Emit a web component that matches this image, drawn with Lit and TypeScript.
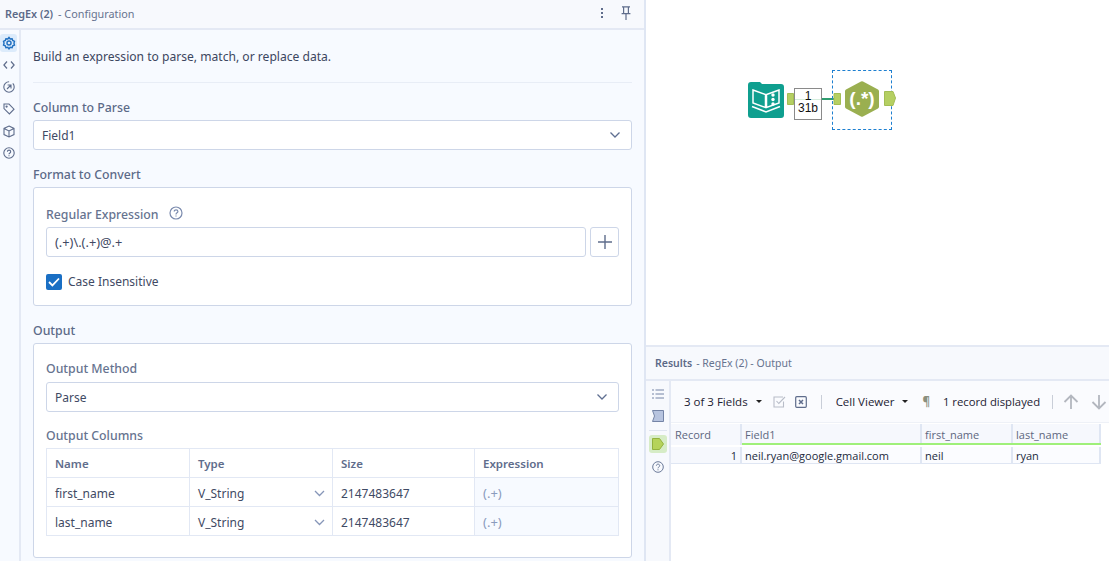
import { LitElement, html, css, svg } from "lit";
import { customElement } from "lit/decorators.js";

const chevron = svg`<svg class="chev" width="12" height="8" viewBox="0 0 12 8"><path d="M1.5 1.5 6 6l4.5-4.5" fill="none" stroke="#5f6f91" stroke-width="1.3"/></svg>`;
const chevronSmall = svg`<svg width="11" height="7" viewBox="0 0 11 7"><path d="M1 1l4.5 4.5L10 1" fill="none" stroke="#8696b8" stroke-width="1.3"/></svg>`;

@customElement("app-root")
export class AppRoot extends LitElement {
  static styles = css`
    :host { display: block; width: 1109px; height: 561px; overflow: hidden; font-family: "Noto Sans", sans-serif; font-size: 12px; color: #3a4560; background: #fff; }
    * { box-sizing: border-box; }
    .root { display: flex; height: 561px; }
    .left { width: 646px; flex: none; display: flex; flex-direction: column; background: #f7faff; border-right: 2px solid #dfe6f3; }
    .head { height: 30px; flex: none; display: flex; align-items: center; padding: 0 13px 2px 5px; border-bottom: 2px solid #e4e9f4; font-size: 10.8px; color: #66738f; background: #f7f9fd; }
    .head b { font-weight: 600; color: #5c6a88; margin-right: 5px; }
    .head .sp { flex: 1; }
    .head svg { display: block; }
    .dots { margin-right: 17px; }
    .body { flex: 1; display: flex; min-height: 0; }
    .rail { width: 21px; flex: none; border-right: 2px solid #e4e9f4; display: flex; flex-direction: column; align-items: center; padding: 4px 2px 0 0; gap: 2px; }
    .rail div { width: 17px; height: 20px; display: flex; align-items: center; justify-content: center; border-radius: 3px; }
    .rail .on { background: #dcebfb; height: 18px; margin-bottom: 1px; }
    .form { flex: 1; padding: 0 12px 0 12px; min-width: 0; }
    .desc { height: 53px; padding-top: 17px; line-height: 20px; font-size: 12.1px; color: #3c4660; border-bottom: 1px solid #e8edf6; }
    .sec { height: 18px; line-height: 18px; font-size: 12.3px; font-weight: 500; color: #5c6a88; }
    .s1 { margin-top: 16px; margin-bottom: 3px; }
    .s2 { margin-top: 16px; margin-bottom: 3px; }
    .s3 { margin-top: 16px; margin-bottom: 3px; }
    .select, .input { height: 30px; background: #fff; border: 1px solid #cdd6e8; border-radius: 3px; display: flex; align-items: center; padding: 0 10px 0 8px; font-size: 12px; color: #3f4a64; justify-content: space-between; }
    .box { background: #fff; border: 1px solid #cdd6e8; border-radius: 3px; padding: 0 12px; }
    .box1 { height: 119px; padding-top: 18px; }
    .box2 { height: 215px; padding-top: 16px; }
    .lab { height: 18px; line-height: 18px; font-size: 12.3px; font-weight: 500; color: #66738f; display: flex; align-items: center; gap: 10px; margin-bottom: 3px; }
    .lab svg { margin-bottom: 4px; }
    .row { display: flex; gap: 4px; }
    .row .input { flex: 1; color: #3f4a64; font-size: 12.8px; }
    .plus { width: 29px; height: 30px; flex: none; border: 1px solid #cdd6e8; border-radius: 3px; display: flex; align-items: center; justify-content: center; }
    .check { display: flex; align-items: center; gap: 6px; margin-top: 17px; font-size: 12px; color: #3f4a64; height: 15px; }
    .cb { width: 16px; height: 16px; background: #1a6fc4; border-radius: 2px; display: flex; align-items: center; justify-content: center; }
    .sel-wrap { margin-top: 4px; }
    .lab2 { margin-top: 15px; margin-bottom: 3px; }
    .tbl { display: grid; grid-template-columns: 143px 143px 142px 144px; border-top: 1px solid #e2e8f4; border-left: 1px solid #e2e8f4; }
    .c { height: 29px; border-right: 1px solid #e2e8f4; border-bottom: 1px solid #e2e8f4; display: flex; align-items: center; padding: 2px 8px 0; font-size: 12px; color: #3f4a64; }
    .c.h { font-weight: 600; color: #5f6d8c; font-size: 11.5px; padding-top: 0; }
    .c.t { justify-content: space-between; padding-right: 7px; }
    .c.x { background: #f7faff; color: #8b9bbd; font-size: 13px; }
    .right { flex: 1; display: flex; flex-direction: column; min-width: 0; }
    .canvas { height: 345px; flex: none; background: #fff; position: relative; }
    .node { position: absolute; }
    .badge { position: absolute; left: 148px; top: 88px; width: 28px; height: 32px; background: #fff; border: 1px solid #8a8a8a; font: 12px/14px "Liberation Sans", sans-serif; color: #111; text-align: center; }
    .badge i { display: block; font-style: normal; }
    .badge .top { height: 11px; line-height: 14px; border-bottom: 1px solid #d6eedd; }
    .badge .bot { line-height: 16px; }
    .sel { position: absolute; left: 186px; top: 70px; width: 60px; height: 60px; border: 1px dashed #1d7fd0; }
    .results { flex: 1; display: flex; flex-direction: column; border-top: 2px solid #e4e9f4; min-height: 0; }
    .rh { height: 34px; flex: none; display: flex; align-items: center; padding: 0 9px; font-size: 10.5px; color: #66738f; background: #f7f9fd; border-bottom: 2px solid #e4e9f4; }
    .rh b { font-weight: 600; color: #5c6a88; margin-right: 4px; }
    .rb { flex: 1; display: flex; min-height: 0; }
    .rrail { width: 25px; flex: none; border-right: 2px solid #e4e9f4; display: flex; flex-direction: column; align-items: center; padding-top: 2px; background: #f7f9fd; }
    .rrail div { width: 18px; height: 22px; display: flex; align-items: center; justify-content: center; }
    .rrail .sep { height: 1px; width: 18px; background: #dfe5f0; margin: 3px 0 4px; }
    .rrail .on { background: #d6ecc6; border-radius: 3px; height: 18px; margin-bottom: 3px; }
    .rm { flex: 1; min-width: 0; }
    .tb { height: 42px; display: flex; align-items: center; padding-left: 13px; font-family: "Open Sans", "Noto Sans", sans-serif; font-size: 11.5px; color: #1c2233; background: #fafbfe; border-bottom: 1px solid #eef1f7; }
    .count { margin-left: 4px; font-size: 11.3px; }
    .para { margin: 0 9px 0 14px; color: #8a8f7e; font-weight: 700; }
    .caret { width: 0; height: 0; border: 3px solid transparent; border-top: 3.5px solid #222; border-bottom: 0; margin-left: 8px; }
    .vsep { width: 1px; height: 14px; background: #c9ced8; }
    .grid { display: grid; grid-template-columns: 71px 180px 91px 88px; margin-top: 1px; font-family: "Open Sans", "Noto Sans", sans-serif; font-size: 11px; }
    .g { height: 21px; display: flex; align-items: center; padding: 0 3px 0; background: #f6f8fd; color: #5d6780; border-right: 2px solid #dfe6f3; position: relative; }
    .g.first { padding-left: 4px; }
    .g.gr::after { content: ""; position: absolute; left: 0; right: -2px; bottom: 0; height: 2px; background: #9ff07a; }
    .d { height: 17px; margin-top: 2px; display: flex; align-items: center; padding: 0 3px; background: #fbfcff; color: #222a3c; border-right: 2px solid #dfe6f3; border-bottom: 1px solid #dfe6f3; }
    .d.n { justify-content: flex-end; background: #f6f8fd; }
  `;

  private gear() {
    return svg`<svg width="14" height="14" viewBox="0 0 24 24" fill="none" stroke="#1f6fc0" stroke-width="2.4"><circle cx="12" cy="12" r="3.5"/><path d="M12 2.5l2 2.6 3.3-.5 1.1 3.1 3 1.4-.9 3.2.9 3.2-3 1.4-1.1 3.1-3.3-.5-2 2.6-2-2.6-3.3.5-1.1-3.1-3-1.4.9-3.2-.9-3.2 3-1.4 1.1-3.1 3.3.5z"/></svg>`;
  }

  render() {
    const ic = "#5f6d8c";
    return html`<div class="root">
      <div class="left">
        <div class="head"><b>RegEx (2)</b><span>- Configuration</span><span class="sp"></span>
          <svg class="dots" width="4" height="12" viewBox="0 0 4 12"><g fill="${ic}"><rect x="1" y="1" width="2" height="2"/><rect x="1" y="5" width="2" height="2"/><rect x="1" y="9" width="2" height="2"/></g></svg>
          <svg width="10" height="14" viewBox="0 0 10 14" fill="none" stroke="${ic}" stroke-width="1.2"><path d="M1 .8h8M2.6 1v6.2M7.4 1v6.2M.6 7.6h8.8M5 8v6"/></svg>
        </div>
        <div class="body">
          <div class="rail">
            <div class="on">${this.gear()}</div>
            <div><svg width="12" height="10" viewBox="0 0 12 10" fill="none" stroke="${ic}" stroke-width="1.2"><path d="M4 1.5.9 5 4 8.5M8 1.5 11.1 5 8 8.5"/></svg></div>
            <div><svg width="12" height="12" viewBox="0 0 12 12" fill="none" stroke="${ic}" stroke-width="1.1"><circle cx="6" cy="6" r="5.2" stroke-dasharray="24 4"/><path d="M4 8l4-4M4.6 4H8v3.4"/></svg></div>
            <div><svg width="12" height="12" viewBox="0 0 12 12" fill="none" stroke="${ic}" stroke-width="1.1"><path d="M1 1h5l5 5.2L6.4 11 1 5.6z"/><circle cx="3.6" cy="3.6" r=".6"/></svg></div>
            <div><svg width="12" height="13" viewBox="0 0 12 13" fill="none" stroke="${ic}" stroke-width="1.1"><path d="M6 1l5 2.4v6.2L6 12 1 9.6V3.400zM1 3.400 6 6l5-2.600M6 6v6"/></svg></div>
            <div><svg width="12" height="12" viewBox="0 0 12 12" fill="none" stroke="${ic}" stroke-width="1.1"><circle cx="6" cy="6" r="5.2"/><path d="M4.4 4.7c0-2.1 3.3-2.1 3.3 0 0 1.3-1.7 1.2-1.7 2.6M6 8.300v1"/></svg></div>
          </div>
          <div class="form">
            <div class="desc">Build an expression to parse, match, or replace data.</div>
            <div class="sec s1">Column to Parse</div>
            <div class="select"><span>Field1</span>${chevron}</div>
            <div class="sec s2">Format to Convert</div>
            <div class="box box1">
              <div class="lab">Regular Expression
                <svg width="14" height="14" viewBox="0 0 14 14" fill="none" stroke="#7a8aad" stroke-width="1.2"><circle cx="7" cy="7" r="6"/><path d="M5.200 5.500c0-2.300 3.700-2.300 3.700 0 0 1.400-1.900 1.300-1.900 2.900M7 9.400v1.100"/></svg>
              </div>
              <div class="row"><div class="input">(.+)\\.(.+)@.+</div>
                <div class="plus"><svg width="14" height="14" viewBox="0 0 14 14" stroke="#5f6d8c" stroke-width="1.4"><path d="M7 0v14M0 7h14"/></svg></div>
              </div>
              <div class="check"><div class="cb"><svg width="12" height="10" viewBox="0 0 12 10" fill="none" stroke="#fff" stroke-width="1.8"><path d="M1 5l3.400 3.400L11 1.500"/></svg></div>Case Insensitive</div>
            </div>
            <div class="sec s3">Output</div>
            <div class="box box2">
              <div class="lab">Output Method</div>
              <div class="select sel-wrap"><span>Parse</span>${chevron}</div>
              <div class="lab lab2">Output Columns</div>
              <div class="tbl">
                <div class="c h">Name</div><div class="c h">Type</div><div class="c h">Size</div><div class="c h">Expression</div>
                <div class="c">first_name</div><div class="c t"><span>V_String</span>${chevronSmall}</div><div class="c">2147483647</div><div class="c x">(.+)</div>
                <div class="c">last_name</div><div class="c t"><span>V_String</span>${chevronSmall}</div><div class="c">2147483647</div><div class="c x">(.+)</div>
              </div>
            </div>
          </div>
        </div>
      </div>
      <div class="right">
        <div class="canvas">
          <svg class="node" style="left:102px;top:82px" width="36" height="36" viewBox="0 0 36 36">
            <path d="M0 3a3 3 0 0 1 3-3h9l2 2h19a3 3 0 0 1 3 3v28a3 3 0 0 1-3 3H3a3 3 0 0 1-3-3z" fill="#0f9f8f"/>
            <path d="M5 8l12.500 4.500v13L5 21zM31 8l-12.500 4.500v13L31 21z" fill="none" stroke="#fff" stroke-width="1.500"/>
            <path d="M4 24.500l14 5.500 14-5.500" fill="none" stroke="#fff" stroke-width="1.600"/>
            <g fill="#fff"><circle cx="25" cy="13" r="1.700"/><circle cx="25" cy="17.500" r="1.700"/><circle cx="25" cy="22" r="1.700"/></g>
          </svg>
          <svg class="node" style="left:141px;top:93px" width="8" height="12"><path d="M.5.500h6v11h-6z" fill="#b5cf62" stroke="#a3bd55"/></svg>
          <div class="badge"><i class="top">1</i><i class="bot">31b</i></div>
          <svg class="node" style="left:176px;top:93px" width="19" height="12"><path d="M0 6h12" stroke="#2f9d70" stroke-width="2"/><path d="M12 .5h6.500v11H12z" fill="#b5cf62" stroke="#a3bd55"/></svg>
          <svg class="node" style="left:196px;top:80px" width="40" height="38" viewBox="0 0 40 38"><path d="M19 1.500a2 2 0 0 1 2 0l15 8a2 2 0 0 1 1 1.700v15.600a2 2 0 0 1-1 1.700l-15 8a2 2 0 0 1-2 0l-15-8a2 2 0 0 1-1-1.700V11.200a2 2 0 0 1 1-1.700z" fill="#9aaf50"/><text x="20" y="25" text-anchor="middle" font-family="Liberation Sans, sans-serif" font-weight="700" font-size="19" fill="#fff">(.*)</text></svg>
          <div class="sel"></div>
          <svg class="node" style="left:238px;top:91px" width="12" height="15"><path d="M.5.500h8.500l2.500 6.500L9 14.500H.5z" fill="#b5cf62" stroke="#a3bd55"/></svg>
        </div>
        <div class="results">
          <div class="rh"><b>Results</b><span>- RegEx (2) - Output</span></div>
          <div class="rb">
            <div class="rrail">
              <div><svg width="12" height="10" viewBox="0 0 12 10" stroke="#7484a6" stroke-width="1"><path d="M0 1h2M3.500 1H12M0 5h2M3.500 5H12M0 9h2M3.500 9H12"/></svg></div>
              <div><svg width="12" height="12" viewBox="0 0 12 12"><path d="M.5.500h11v11H.5l2-5.500z" fill="#b7c4df" stroke="#7484a6"/></svg></div>
              <div class="sep"></div>
              <div class="on"><svg width="12" height="12" viewBox="0 0 12 12"><path d="M.5.500h7L11.500 6l-4 5.500h-7z" fill="#b5d35a" stroke="#93b23e"/></svg></div>
              <div><svg width="12" height="12" viewBox="0 0 12 12" fill="none" stroke="#6b7a99" stroke-width="1"><circle cx="6" cy="6" r="5.300"/><path d="M4.400 4.700c0-2.100 3.300-2.100 3.300 0 0 1.300-1.700 1.200-1.700 2.600M6 8.300v1"/></svg></div>
            </div>
            <div class="rm">
              <div class="tb">
                <span>3 of 3 Fields</span><span class="caret"></span>
                <svg style="margin-left:11px" width="13" height="12" viewBox="0 0 13 12" fill="none" stroke="#b8bdc8" stroke-width="1.100"><path d="M10.500 5.500V11H1V1h9"/><path d="M3.500 5l2.300 2.500L12 1" /></svg>
                <svg style="margin-left:9px" width="12" height="12" viewBox="0 0 12 12" fill="none" stroke="#5f6d8c" stroke-width="1.200"><rect x=".7" y=".7" width="10.600" height="10.600" rx="1"/><path d="M4 4l4 4M8 4 4 8" stroke-width="1.500"/></svg>
                <span class="vsep" style="margin:0 14px 0 14px"></span>
                <span>Cell Viewer</span><span class="caret"></span>
                <span class="para">¶</span>
                <span class="count">1 record displayed</span>
                <span class="vsep" style="margin:0 10px 0 12px"></span>
                <svg width="16" height="16" viewBox="0 0 16 16" fill="none" stroke="#b3b7bf" stroke-width="1.800"><path d="M8 15V2M1.500 8 8 1.500 14.500 8"/></svg>
                <svg style="margin-left:12px" width="16" height="16" viewBox="0 0 16 16" fill="none" stroke="#b3b7bf" stroke-width="1.800"><path d="M8 1v13M1.500 8 8 14.500 14.500 8"/></svg>
              </div>
              <div class="grid">
                <div class="g first">Record</div><div class="g gr">Field1</div><div class="g gr">first_name</div><div class="g gr">last_name</div>
                <div class="d n">1</div><div class="d">neil.ryan@google.gmail.com</div><div class="d">neil</div><div class="d">ryan</div>
              </div>
            </div>
          </div>
        </div>
      </div>
    </div>`;
  }
}
